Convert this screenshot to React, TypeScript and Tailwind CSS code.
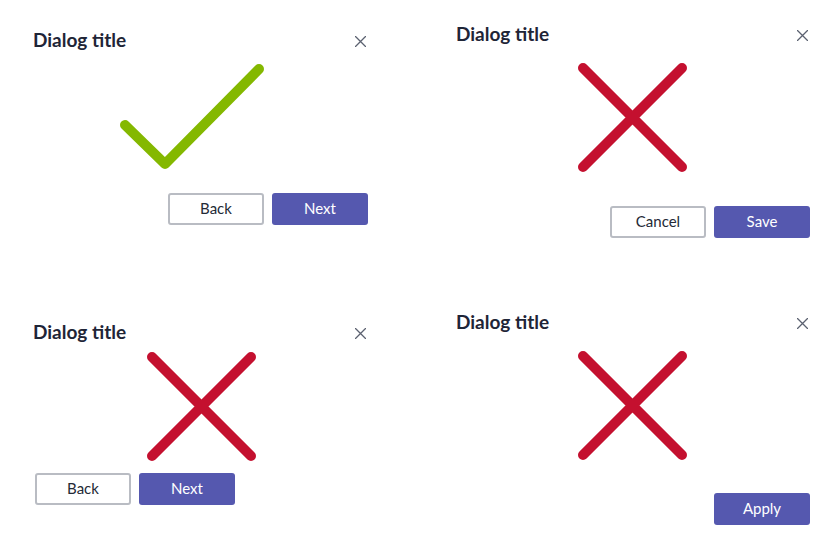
import React from "react";

const font = { fontFamily: 'Lato, "Open Sans", sans-serif' };

function CloseIcon() {
  return (
    <svg width="11" height="11" viewBox="0 0 11 11" className="shrink-0">
      <path d="M0.5 0.5 L10.5 10.5 M10.5 0.5 L0.5 10.5" stroke="#5b6170" strokeWidth="1.3" strokeLinecap="round" />
    </svg>
  );
}

function Header() {
  return (
    <div className="flex h-[28px] items-center justify-between">
      <span className="text-[19px] leading-[24px] font-bold text-[#1f2537]">Dialog title</span>
      <span className="mr-[2px] mt-[2px] flex items-center">
        <CloseIcon />
      </span>
    </div>
  );
}

function Secondary({ label }: { label: string }) {
  return (
    <button className="flex h-[32px] w-[96px] items-center justify-center rounded-[3px] border-2 border-[#b9bcc3] bg-white pb-[1px] text-[15px] text-[#242a36]">
      {label}
    </button>
  );
}

function Primary({ label }: { label: string }) {
  return (
    <button className="flex h-[32px] w-[96px] items-center justify-center rounded-[3px] bg-[#5558af] pb-[1px] text-[15px] text-white">
      {label}
    </button>
  );
}

function RedX({ w, h, x, y }: { w: number; h: number; x: number; y: number }) {
  const s = 99;
  return (
    <svg width={w} height={h} className="block">
      <path
        d={`M${x} ${y} L${x + s} ${y + s} M${x + s} ${y} L${x} ${y + s}`}
        stroke="#c4102f"
        strokeWidth="10"
        strokeLinecap="round"
        fill="none"
      />
    </svg>
  );
}

export default function App() {
  return (
    <div className="grid h-[546px] w-[833px] grid-cols-[416px_417px] grid-rows-[273px_273px] bg-white" style={font}>
      {/* top-left */}
      <div className="flex flex-col pl-[33px] pr-[48px] pt-[26px]">
        <Header />
        <svg width="335" height="139" className="block">
          <path d="M92 71 L132 110 L226 15" stroke="#84b800" strokeWidth="10" strokeLinecap="round" strokeLinejoin="round" fill="none" />
        </svg>
        <div className="flex justify-end gap-2">
          <Secondary label="Back" />
          <Primary label="Next" />
        </div>
      </div>
      {/* top-right */}
      <div className="flex flex-col pl-[40px] pr-[23px] pt-[20px]">
        <Header />
        <RedX w={354} h={158} x={127} y={20} />
        <div className="flex justify-end gap-2">
          <Secondary label="Cancel" />
          <Primary label="Save" />
        </div>
      </div>
      {/* bottom-left */}
      <div className="flex flex-col pl-[33px] pr-[48px] pt-[45px]">
        <Header />
        <RedX w={335} h={127} x={119} y={11} />
        <div className="flex justify-start gap-2 pl-[2px]">
          <Secondary label="Back" />
          <Primary label="Next" />
        </div>
      </div>
      {/* bottom-right */}
      <div className="flex flex-col pl-[40px] pr-[23px] pt-[35px]">
        <Header />
        <RedX w={354} h={157} x={127} y={20} />
        <div className="flex justify-end">
          <Primary label="Apply" />
        </div>
      </div>
    </div>
  );
}
